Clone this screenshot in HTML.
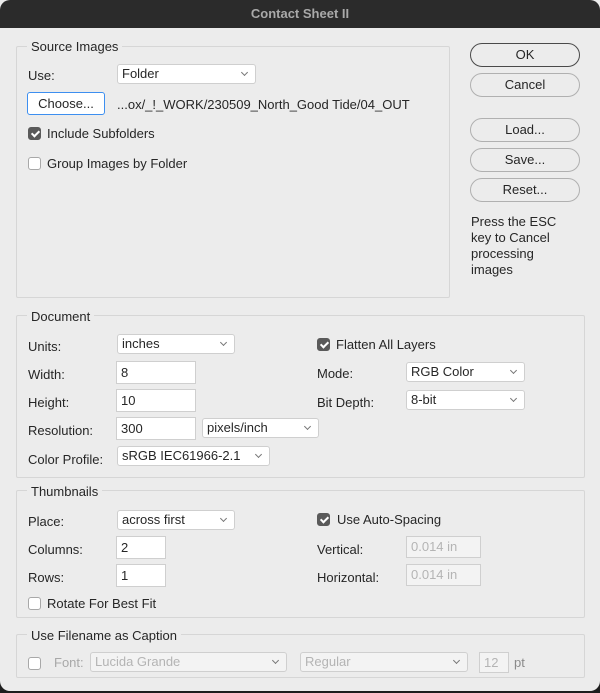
<!DOCTYPE html>
<html><head><meta charset="utf-8"><style>
*{box-sizing:border-box;margin:0;padding:0}
body{width:600px;height:693px;background:#1e1e1e;font-family:"Liberation Sans",Arial,sans-serif;font-size:13px;color:#262626;position:relative;overflow:hidden}
.win{position:absolute;left:0;top:0;width:600px;height:691px;background:#ececec;border-radius:0 0 10px 10px;overflow:hidden}
.title{position:absolute;left:0;top:0;width:600px;height:28px;background:#2b2b2b;color:#a9a9a9;font-weight:bold;text-align:center;line-height:28px;font-size:13px;border-radius:10px 10px 0 0}
.a{position:absolute;white-space:nowrap}
.grp{position:absolute;border:1px solid #d6d6d6;border-radius:2px}
.lg{position:absolute;background:#ececec;padding:0 4px;font-size:13px;color:#262626;white-space:nowrap}
.sel{position:absolute;background:#fff;border:1px solid #cfcfcf;border-radius:3px;height:20px;line-height:18px;padding-left:4px;font-size:13px}
.sel:after{content:"";position:absolute;right:8px;top:5px;width:4px;height:4px;border-right:1px solid #777;border-bottom:1px solid #777;transform:rotate(45deg)}
.inp{position:absolute;background:#fff;border:1px solid #cfcfcf;height:23px;line-height:21px;padding-left:4px;font-size:13px}
.dis{color:#b4b4b4;background:#f3f3f3}
.cb{position:absolute;width:13px;height:13px;border:1px solid #a8a8a8;border-radius:3px;background:#fff}
.cb.on{background:#5a5a5a;border-color:#5a5a5a}
.cb.on:after{content:"";position:absolute;left:3.5px;top:1px;width:3px;height:6px;border-right:2px solid #fff;border-bottom:2px solid #fff;transform:rotate(45deg)}
.btn{position:absolute;left:470px;width:110px;height:24px;border:1px solid #b0b0b0;border-radius:12px;text-align:center;line-height:22px;background:#ececec}
</style></head><body>
<div class="win">
<div class="title">Contact Sheet II</div>

<div class="grp" style="left:16px;top:46px;width:434px;height:252px"></div>
<div class="lg" style="left:27px;top:39px">Source Images</div>
<div class="a" style="left:28px;top:68px">Use:</div>
<div class="sel" style="left:117px;top:64px;width:139px">Folder</div>
<div class="a" style="left:27px;top:92px;width:78px;height:23px;border:1px solid #3d8ff0;border-radius:3px;background:#fff;text-align:center;line-height:21px">Choose...</div>
<div class="a" style="left:117px;top:97px">...ox/_!_WORK/230509_North_Good Tide/04_OUT</div>
<div class="cb on" style="left:28px;top:127px"></div>
<div class="a" style="left:47px;top:126px">Include Subfolders</div>
<div class="cb" style="left:28px;top:157px"></div>
<div class="a" style="left:47px;top:156px">Group Images by Folder</div>

<div class="btn" style="top:43px;border-color:#4a4a4a">OK</div>
<div class="btn" style="top:73px">Cancel</div>
<div class="btn" style="top:118px">Load...</div>
<div class="btn" style="top:148px">Save...</div>
<div class="btn" style="top:178px">Reset...</div>
<div class="a" style="left:471px;top:214px;line-height:16px;white-space:normal;width:90px">Press the ESC key to Cancel processing images</div>

<div class="grp" style="left:16px;top:315px;width:569px;height:163px"></div>
<div class="lg" style="left:27px;top:309px">Document</div>
<div class="a" style="left:28px;top:339px">Units:</div>
<div class="sel" style="left:117px;top:334px;width:118px">inches</div>
<div class="a" style="left:28px;top:367px">Width:</div>
<div class="inp" style="left:116px;top:361px;width:80px">8</div>
<div class="a" style="left:28px;top:395px">Height:</div>
<div class="inp" style="left:116px;top:389px;width:80px">10</div>
<div class="a" style="left:28px;top:423px">Resolution:</div>
<div class="inp" style="left:116px;top:417px;width:80px">300</div>
<div class="sel" style="left:202px;top:418px;width:117px">pixels/inch</div>
<div class="a" style="left:28px;top:452px">Color Profile:</div>
<div class="sel" style="left:117px;top:446px;width:153px">sRGB IEC61966-2.1</div>
<div class="cb on" style="left:317px;top:338px"></div>
<div class="a" style="left:336px;top:337px">Flatten All Layers</div>
<div class="a" style="left:317px;top:366px">Mode:</div>
<div class="sel" style="left:406px;top:362px;width:119px">RGB Color</div>
<div class="a" style="left:317px;top:395px">Bit Depth:</div>
<div class="sel" style="left:406px;top:390px;width:119px">8-bit</div>

<div class="grp" style="left:16px;top:490px;width:569px;height:128px"></div>
<div class="lg" style="left:27px;top:484px">Thumbnails</div>
<div class="a" style="left:28px;top:514px">Place:</div>
<div class="sel" style="left:117px;top:510px;width:118px">across first</div>
<div class="a" style="left:28px;top:542px">Columns:</div>
<div class="inp" style="left:116px;top:536px;width:50px">2</div>
<div class="a" style="left:28px;top:570px">Rows:</div>
<div class="inp" style="left:116px;top:564px;width:50px">1</div>
<div class="cb" style="left:28px;top:597px"></div>
<div class="a" style="left:47px;top:596px">Rotate For Best Fit</div>
<div class="cb on" style="left:317px;top:513px"></div>
<div class="a" style="left:337px;top:512px">Use Auto-Spacing</div>
<div class="a" style="left:317px;top:542px">Vertical:</div>
<div class="inp dis" style="left:406px;top:536px;width:75px;height:22px;line-height:20px">0.014 in</div>
<div class="a" style="left:317px;top:570px">Horizontal:</div>
<div class="inp dis" style="left:406px;top:564px;width:75px;height:22px;line-height:20px">0.014 in</div>

<div class="grp" style="left:16px;top:634px;width:569px;height:44px"></div>
<div class="lg" style="left:27px;top:628px">Use Filename as Caption</div>
<div class="cb" style="left:28px;top:657px"></div>
<div class="a" style="left:54px;top:655px;color:#a8a8a8">Font:</div>
<div class="sel dis" style="left:90px;top:652px;width:197px;background:#f3f3f3">Lucida Grande</div>
<div class="sel dis" style="left:300px;top:652px;width:168px;background:#f3f3f3">Regular</div>
<div class="inp dis" style="left:479px;top:652px;width:30px;height:21px;line-height:19px">12</div>
<div class="a" style="left:514px;top:655px;color:#8a8a8a">pt</div>
</div>
</body></html>
